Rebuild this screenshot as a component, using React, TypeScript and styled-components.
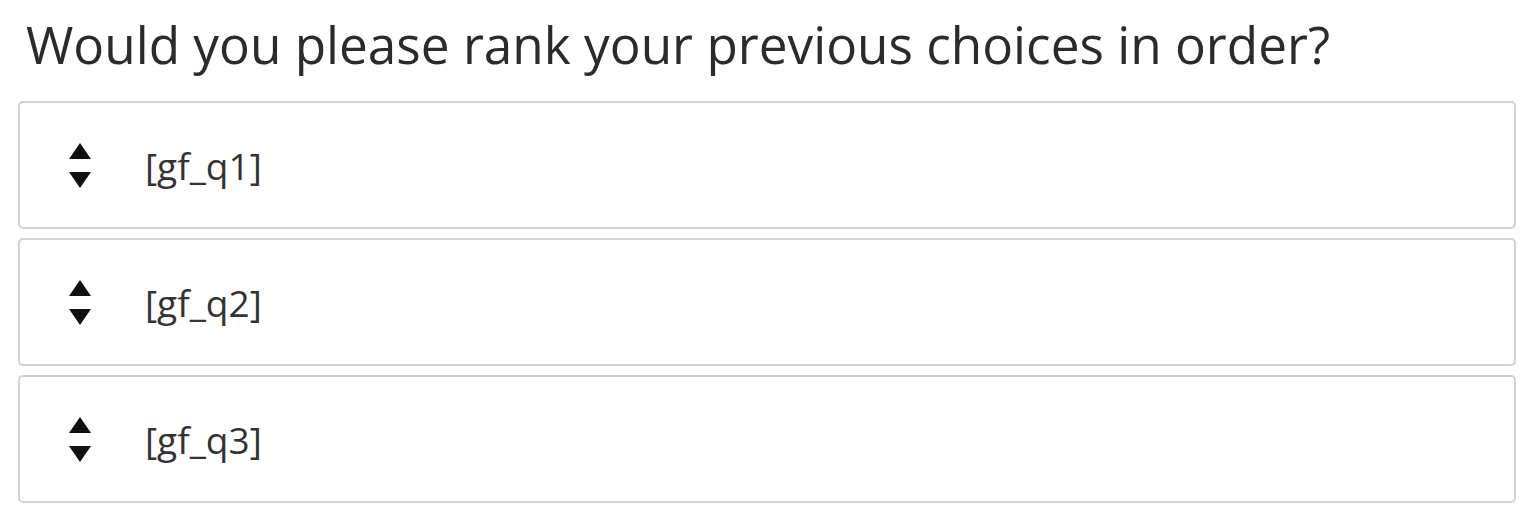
import React from "react";
import styled, { createGlobalStyle } from "styled-components";

const GlobalStyle = createGlobalStyle`
  html, body {
    margin: 0;
    padding: 0;
    background: #fff;
  }
  body {
    font-family: "Open Sans", "Noto Sans", sans-serif;
    color: #333;
  }
`;

const Page = styled.div`
  padding: 8px 20px 0 18px;
`;

const Question = styled.h1`
  margin: 0 0 21px 8px;
  font-size: 51.3px;
  font-weight: 400;
  line-height: 72px;
  color: #2b2b2b;
`;

const RankList = styled.ul`
  list-style: none;
  margin: 0;
  padding: 0;
  display: flex;
  flex-direction: column;
  gap: 9px;
`;

const RankItem = styled.li`
  height: 124px;
  border: 2px solid #d2d2d2;
  border-radius: 5px;
  display: flex;
  align-items: center;
  padding-left: 49px;
  background: #fff;
`;

const Handle = styled.svg`
  width: 22px;
  height: 45px;
  flex: none;
  margin-right: 54px;
`;

const Label = styled.span`
  font-size: 37px;
  color: #333;
`;

const SortIcon = () => (
  <Handle viewBox="0 0 22 45">
    <path d="M11 0 L22 16 L0 16 Z" fill="#111" />
    <path d="M0 29 L22 29 L11 45 Z" fill="#111" />
  </Handle>
);

const choices = ["[gf_q1]", "[gf_q2]", "[gf_q3]"];

export default function App() {
  return (
    <Page>
      <GlobalStyle />
      <Question>Would you please rank your previous choices in order?</Question>
      <RankList>
        {choices.map((c) => (
          <RankItem key={c}>
            <SortIcon />
            <Label>{c}</Label>
          </RankItem>
        ))}
      </RankList>
    </Page>
  );
}
